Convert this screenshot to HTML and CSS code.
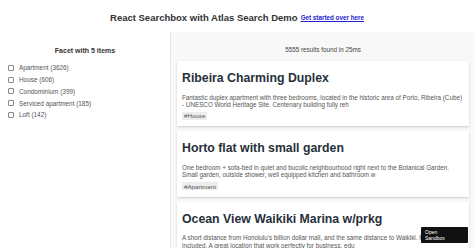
FILE: index.html
```html
<!DOCTYPE html>
<html>
<head>
<meta charset="utf-8">
<link rel="stylesheet" href="styles.css">
</head>
<body>
<header class="header">
  <h1 class="title">React Searchbox with Atlas Search Demo</h1>
  <a class="start-link" href="#">Get started over here</a>
</header>
<div class="layout">
  <aside class="facets">
    <h2 class="facet-title">Facet with 5 items</h2>
    <ul class="facet-list">
      <li class="facet-item"><span class="box"></span>Apartment (3626)</li>
      <li class="facet-item"><span class="box"></span>House (606)</li>
      <li class="facet-item"><span class="box"></span>Condominium (399)</li>
      <li class="facet-item"><span class="box"></span>Serviced apartment (185)</li>
      <li class="facet-item"><span class="box"></span>Loft (142)</li>
    </ul>
  </aside>
  <main class="results">
    <p class="summary">5555 results found in 25ms</p>
    <article class="card">
      <h3 class="card-title">Ribeira Charming Duplex</h3>
      <p class="card-desc">Fantastic duplex apartment with three bedrooms, located in the historic area of Porto, Ribeira (Cube) - UNESCO World Heritage Site. Centenary building fully reh</p>
      <span class="tag">#House</span>
    </article>
    <article class="card">
      <h3 class="card-title">Horto flat with small garden</h3>
      <p class="card-desc">One bedroom + sofa-bed in quiet and bucolic neighbourhood right next to the Botanical Garden. Small garden, outside shower, well equipped kitchen and bathroom w</p>
      <span class="tag">#Apartment</span>
    </article>
    <article class="card">
      <h3 class="card-title">Ocean View Waikiki Marina w/prkg</h3>
      <p class="card-desc">A short distance from Honolulu's billion dollar mall, and the same distance to Waikiki. Parking included. A great location that work perfectly for business, edu</p>
      <span class="tag">#Condominium</span>
    </article>
  </main>
</div>
<div class="sandbox">Open<br>Sandbox</div>
</body>
</html>
```
FILE: styles.css
```css
html, body {
  margin: 0;
  padding: 0;
  height: 100%;
  overflow: hidden;
  background: #fff;
  font-family: "Liberation Sans", Arial, sans-serif;
  color: #333;
}
.header {
  height: 32px;
  display: flex;
  align-items: center;
  justify-content: center;
  gap: 3px;
  padding-top: 2px;
  box-sizing: border-box;
}
.title {
  margin: 0;
  font-size: 9.5px;
  font-weight: bold;
  color: #333;
}
.start-link {
  font-size: 6.3px;
  font-weight: bold;
  color: #2222cc;
  text-decoration: underline;
  margin-top: 1px;
}
.layout {
  display: flex;
  height: calc(100% - 32px);
}
.facets {
  width: 170px;
  flex: none;
  box-sizing: border-box;
  padding: 15px 8px 0;
}
.facet-title {
  margin: 0 0 8px;
  text-align: center;
  font-size: 7px;
  font-weight: bold;
  color: #333;
}
.facet-list {
  list-style: none;
  margin: 0;
  padding: 0;
}
.facet-item {
  display: flex;
  align-items: center;
  gap: 5px;
  height: 11.75px;
  font-size: 6.4px;
  color: #555;
}
.box {
  width: 4px;
  height: 4px;
  border: 0.6px solid #888;
  border-radius: 1px;
  flex: none;
}
.results {
  flex: 1;
  background: #f8f8f8;
  border-left: 1px solid #e6e6e6;
  padding: 0 5px 0 6px;
  display: flex;
  flex-direction: column;
  gap: 5px;
  font-size: 6.2px;
}
.summary {
  margin: 14px 0 3px;
  text-align: center;
  font-size: 6.3px;
  color: #444;
}
.card {
  background: #fff;
  box-shadow: 0 1px 2px rgba(0,0,0,0.18);
  padding: 10px 5px 6.5px;
  flex: none;
}
.card-title {
  margin: 0 0 8.5px;
  font-size: 12.3px;
  font-weight: bold;
  color: #27303a;
}
.card-desc {
  margin: 0 0 3.5px;
  font-size: 6.3px;
  line-height: 7.4px;
  color: #555;
}
.tag {
  display: block;
  width: fit-content;
  background: #ededed;
  font-size: 6.2px;
  line-height: 7px;
  color: #555;
  padding: 0.5px 2px;
}
.sandbox {
  position: absolute;
  left: 421px;
  top: 227px;
  width: 47px;
  height: 16px;
  box-sizing: border-box;
  padding: 1.5px 4px;
  background: #111;
  color: #fff;
  font-size: 5px;
  line-height: 6px;
  border-radius: 1px;
}
```
